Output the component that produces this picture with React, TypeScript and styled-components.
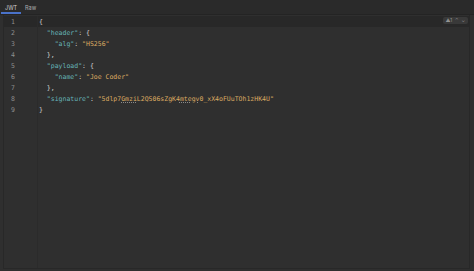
import React from "react";
import styled, { createGlobalStyle } from "styled-components";

const Global = createGlobalStyle`
  html, body { margin: 0; padding: 0; background: #2b2b2b; }
  body { width: 474px; height: 271px; overflow: hidden; }
  #root { height: 100%; }
`;

const Shell = styled.div`
  display: flex;
  flex-direction: column;
  width: 474px;
  height: 271px;
  background: #2f2f2f;
  font-family: "Inter", "Liberation Sans", sans-serif;
`;

const TabBar = styled.div`
  display: flex;
  height: 14px;
  background: #2a2a2a;
  border-bottom: 1px solid #242424;
  padding-left: 1px;
`;

const Tab = styled.div<{ $active?: boolean }>`
  display: flex;
  align-items: center;
  padding: 1px 4px 0;
  font-size: 5.5px;
  color: ${(p) => (p.$active ? "#d0d0d0" : "#b0b0b0")};
  box-shadow: ${(p) => (p.$active ? "inset 0 -2px 0 #4a72c9" : "none")};
`;

const Editor = styled.div`
  position: relative;
  flex: 1;
  display: flex;
  margin: 0 4px 2px 3px;
  padding-top: 1px;
  border-left: 1px solid #282828;
  border-right: 1px solid #282828;
  border-bottom: 1px solid #282828;
  background: #2f2f2f;
`;

const Gutter = styled.div`
  width: 33px;
  border-right: 1px solid #2b2b2b;
  display: flex;
  flex-direction: column;
`;

const Code = styled.div`
  flex: 1;
  display: flex;
  flex-direction: column;
`;

const Row = styled.div<{ $current?: boolean }>`
  height: 11px;
  line-height: 12px;
  font-family: "DejaVu Sans Mono", monospace;
  font-size: 6.5px;
  white-space: pre;
  background: ${(p) => (p.$current ? "#282828" : "transparent")};
`;

const LineNo = styled(Row)`
  padding-left: 7px;
  color: #8e8e8e;
`;

const CodeRow = styled(Row)`
  padding-left: 1px;
  color: #cfcfcf;
`;

const Key = styled.span`
  color: #66b4b8;
`;

const Str = styled.span`
  color: #dcaa62;
`;

const Under = styled.span`
  text-decoration: underline dotted #8a8a8a;
`;

const Widget = styled.div`
  position: absolute;
  top: 2px;
  right: 1px;
  display: flex;
  align-items: center;
  gap: 3px;
  padding: 1px 3px;
  background: #393939;
  border-radius: 2px;
  font-size: 4.5px;
  color: #9a9a9a;
  font-family: "Inter", sans-serif;
`;

type Seg = { t: string; k?: "key" | "str" | "strU" };

const lines: Seg[][] = [
  [{ t: "{" }],
  [{ t: "  " }, { t: "\"header\"", k: "key" }, { t: ": {" }],
  [{ t: "    " }, { t: "\"alg\"", k: "key" }, { t: ": " }, { t: "\"HS256\"", k: "str" }],
  [{ t: "  }," }],
  [{ t: "  " }, { t: "\"payload\"", k: "key" }, { t: ": {" }],
  [{ t: "    " }, { t: "\"name\"", k: "key" }, { t: ": " }, { t: "\"Joe Coder\"", k: "str" }],
  [{ t: "  }," }],
  [
    { t: "  " },
    { t: "\"signature\"", k: "key" },
    { t: ": " },
    { t: "\"5dlp7", k: "str" },
    { t: "Gmzi", k: "strU" },
    { t: "L2QS06sZgK4", k: "str" },
    { t: "mtegv", k: "strU" },
    { t: "0_xX4oFUuTOh1zHK4U\"", k: "str" },
  ],
  [{ t: "}" }],
];

export default function App() {
  return (
    <>
      <Global />
      <Shell>
        <TabBar>
          <Tab $active>JWT</Tab>
          <Tab>Raw</Tab>
        </TabBar>
        <Editor>
          <Gutter>
            {lines.map((_, i) => (
              <LineNo key={i} $current={i === 0}>
                {i + 1}
              </LineNo>
            ))}
          </Gutter>
          <Code>
            {lines.map((segs, i) => (
              <CodeRow key={i} $current={i === 0}>
                {segs.map((s, j) =>
                  s.k === "key" ? (
                    <Key key={j}>{s.t}</Key>
                  ) : s.k === "str" ? (
                    <Str key={j}>{s.t}</Str>
                  ) : s.k === "strU" ? (
                    <Str key={j}>
                      <Under>{s.t}</Under>
                    </Str>
                  ) : (
                    <span key={j}>{s.t}</span>
                  )
                )}
              </CodeRow>
            ))}
          </Code>
          <Widget>
            <span>⚠1</span>
            <span>⌃</span>
            <span>⌄</span>
          </Widget>
        </Editor>
      </Shell>
    </>
  );
}
